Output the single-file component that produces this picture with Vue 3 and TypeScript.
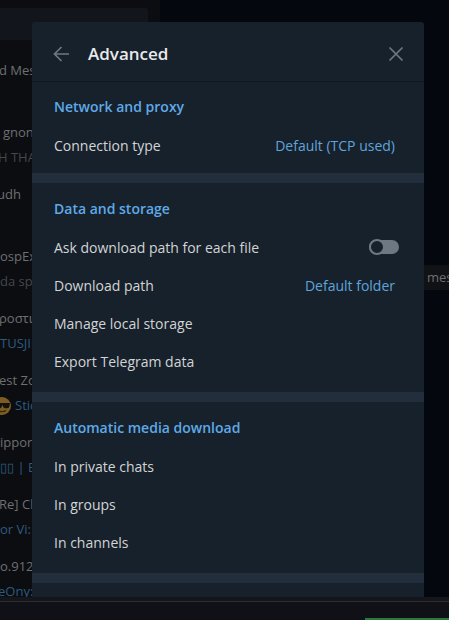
<script setup lang="ts">
interface ChatLine { text: string; x: number; kind: 'name' | 'sub' | 'link' | 'empty' }
const rows: ChatLine[][] = [
  [{ text: 'd Messages', x: -1, kind: 'name' }, { text: '', x: 0, kind: 'empty' }],
  [{ text: 'gnon', x: 3, kind: 'name' }, { text: 'H THAT', x: -2, kind: 'sub' }],
  [{ text: 'udh', x: -3, kind: 'name' }, { text: '', x: 0, kind: 'empty' }],
  [{ text: 'ospExtended', x: 0, kind: 'name' }, { text: 'da spesial', x: 0, kind: 'sub' }],
  [{ text: 'ροστιƒy', x: -1, kind: 'name' }, { text: 'TUSJIN', x: 0, kind: 'link' }],
  [{ text: 'est Zone', x: -1, kind: 'name' }, { text: '', x: 0, kind: 'empty' }],
  [{ text: 'ippor', x: 0, kind: 'name' }, { text: '▯▯ | E', x: 0, kind: 'link' }],
  [{ text: 'Re] Chat', x: -1, kind: 'name' }, { text: 'or Vi: A', x: 0, kind: 'link' }],
  [{ text: 'o.912', x: 0, kind: 'name' }, { text: 'eOny: Hi', x: -2, kind: 'link' }],
]
</script>

<template>
  <div class="screen">
    <div class="main">
      <aside class="sidebar">
        <div class="search"></div>
        <div class="chats">
          <div v-for="(row, i) in rows" :key="i" class="chat">
            <div v-for="(line, j) in row" :key="j" class="line" :class="line.kind" :style="{ marginLeft: line.x + 'px' }">{{ line.text }}</div>
            <div v-if="i === 5" class="line link sticker">
              <svg class="emoji" width="18" height="18" viewBox="0 0 18 18">
                <circle cx="8" cy="9" r="9" fill="#7c5f20" />
                <path d="M0 6h16l-.6 3.6q-.3 1.6-2.4 1.6h-1.8q-1.7 0-2.2-2l-.6-1.2-.5 1.2q-.5 2-2.3 2H2.8Q.8 11.200.4 9.500Z" fill="#14120e" />
                <path d="M4 13.500q4 2.500 8 0" stroke="#2e2410" stroke-width="1.200" fill="none" />
              </svg>
              <span>Sticker</span>
            </div>
          </div>
        </div>
      </aside>
      <div class="chat-area"></div>
    </div>
    <footer class="bottom">
      <div class="progress"></div>
    </footer>

    <div class="tip">mes</div>

    <section class="dialog">
      <header class="head">
        <svg class="icon" width="18" height="18" viewBox="0 0 18 18">
          <path d="M17 9H2.500M9.500 2l-7 7 7 7" fill="none" stroke="#6d7780" stroke-width="1.700" />
        </svg>
        <h1>Advanced</h1>
        <svg class="icon close" width="16" height="16" viewBox="0 0 16 16">
          <path d="M1.500 1.500l13 13M14.500 1.500l-13 13" fill="none" stroke="#6d7780" stroke-width="1.700" />
        </svg>
      </header>

      <div class="block first">
        <h2>Network and proxy</h2>
        <div class="row"><span>Connection type</span><a>Default (TCP used)</a></div>
      </div>
      <div class="sep"></div>
      <div class="block second">
        <h2>Data and storage</h2>
        <div class="row">
          <span>Ask download path for each file</span>
          <span class="toggle"><i></i></span>
        </div>
        <div class="row"><span>Download path</span><a>Default folder</a></div>
        <div class="row"><span>Manage local storage</span></div>
        <div class="row"><span>Export Telegram data</span></div>
      </div>
      <div class="sep"></div>
      <div class="block third">
        <h2>Automatic media download</h2>
        <div class="row"><span>In private chats</span></div>
        <div class="row"><span>In groups</span></div>
        <div class="row"><span>In channels</span></div>
      </div>
      <div class="sep"></div>
    </section>
  </div>
</template>

<style>
html, body { margin: 0; background: #04070d; }
</style>

<style scoped>
.screen {
  position: relative;
  width: 449px;
  height: 620px;
  overflow: hidden;
  display: flex;
  flex-direction: column;
  font-family: "Open Sans", "Noto Sans", sans-serif;
  background: #04070d;
}
.main { flex: 1; display: flex; min-height: 0; }
.sidebar {
  width: 160px;
  background: #0b0d11;
  display: flex;
  flex-direction: column;
  overflow: hidden;
}
.search {
  flex: none;
  width: 148px;
  height: 32px;
  margin-top: 8px;
  background: #12161c;
  border-radius: 0 3px 3px 0;
}
.chats { padding-top: 18px; }
.chat {
  height: 62px;
  display: flex;
  flex-direction: column;
  box-sizing: border-box;
}
.line {
  white-space: nowrap;
  font-size: 13px;
  line-height: 25px;
  height: 25px;
}
.name { color: #6e6f71; font-weight: 500; }
.sub { color: #45474b; }
.link { color: #2f5a80; }
.sticker { display: flex; align-items: center; margin-top: -25px; }
.emoji { margin-left: -6px; margin-right: 3px; flex: none; }
.chat-area { flex: 1; }
.bottom {
  flex: none;
  height: 23px;
  box-sizing: border-box;
  position: relative;
  background: #0f1116;
  border-top: 4px solid #14161c;
  box-shadow: inset 0 1px 0 #2b2d31;
}
.progress {
  position: absolute;
  right: 0;
  bottom: 0;
  width: 84px;
  height: 2px;
  background: #2a7a40;
}
.tip {
  position: absolute;
  left: 400px;
  top: 265px;
  width: 49px;
  height: 25px;
  padding-left: 27px;
  box-sizing: border-box;
  background: #101215;
  color: #6e6f71;
  font-size: 13px;
  line-height: 25px;
  white-space: nowrap;
  overflow: hidden;
}
.dialog {
  position: absolute;
  left: 32px;
  top: 22px;
  width: 392px;
  height: 575px;
  background: #17212b;
  border-radius: 3px 3px 0 0;
  overflow: hidden;
  color: #d2d4d6;
  font-size: 14px;
}
.head {
  height: 60px;
  box-sizing: border-box;
  border-bottom: 1px solid #101921;
  display: flex;
  align-items: center;
  padding: 4px 20px 0 20px;
}
.head h1 {
  margin: 0 0 0 18px;
  flex: 1;
  font-size: 17px;
  font-weight: 600;
  color: #e8eaeb;
}
.block { box-sizing: border-box; }
.first { height: 91px; padding-top: 15px; }
.second { height: 209px; padding-top: 16px; }
.third { height: 171px; padding-top: 16px; }
.block h2 {
  margin: 0 22px 9px;
  font-size: 14px;
  line-height: 20px;
  font-weight: 600;
  color: #5eaae8;
}
.row {
  height: 38px;
  padding: 0 29px 0 22px;
  display: flex;
  align-items: center;
  justify-content: space-between;
  white-space: nowrap;
}
.row a { color: #5fa4dc; }
.sep { height: 10px; background: #232e3c; }
.toggle {
  position: relative;
  width: 30px;
  height: 14px;
  border-radius: 7px;
  background: #6d7883;
  margin-right: -4px;
}
.toggle i {
  position: absolute;
  left: 0;
  top: -1px;
  width: 12px;
  height: 12px;
  border: 2px solid #6d7883;
  border-radius: 50%;
  background: #17212b;
}
</style>
